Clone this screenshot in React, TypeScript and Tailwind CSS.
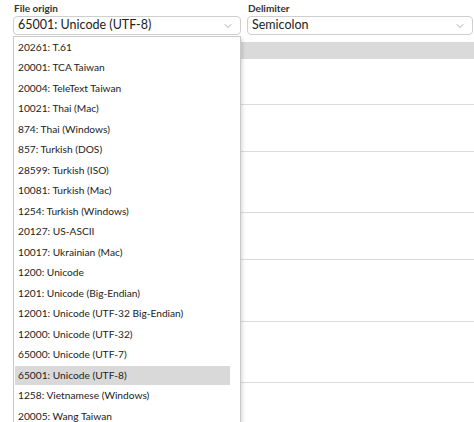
import { ChevronDown } from 'lucide-react';

const encodings = [
  '20261: T.61',
  '20001: TCA Taiwan',
  '20004: TeleText Taiwan',
  '10021: Thai (Mac)',
  '874: Thai (Windows)',
  '857: Turkish (DOS)',
  '28599: Turkish (ISO)',
  '10081: Turkish (Mac)',
  '1254: Turkish (Windows)',
  '20127: US-ASCII',
  '10017: Ukrainian (Mac)',
  '1200: Unicode',
  '1201: Unicode (Big-Endian)',
  '12001: Unicode (UTF-32 Big-Endian)',
  '12000: Unicode (UTF-32)',
  '65000: Unicode (UTF-7)',
  '65001: Unicode (UTF-8)',
  '1258: Vietnamese (Windows)',
  '20005: Wang Taiwan',
];

// heights include the bottom rule
const rowHeights = [46, 47, 61, 47, 62, 61, 40];

function Select({ label, value }: { label: string; value: string }) {
  return (
    <div className="flex flex-col">
      <span className="text-[10px] font-bold leading-[14px] text-[#333] pl-px">{label}</span>
      <div className="mt-px h-[19px] flex items-center justify-between rounded-[4px] border border-[#cfcfcf] pl-[4px] pr-[6px] bg-white">
        <span className="text-[12.5px] text-[#222] leading-none">{value}</span>
        <ChevronDown className="w-3 h-3 text-[#777]" strokeWidth={1.25} />
      </div>
    </div>
  );
}

export default function App() {
  return (
    <div
      className="relative w-[474px] h-[422px] overflow-hidden bg-white"
      style={{ fontFamily: 'Lato, "Noto Sans", sans-serif' }}
    >
      <div className="grid grid-cols-[228px_226px] gap-[6px] pl-[13px] pt-px">
        <Select label="File origin" value="65001: Unicode (UTF-8)" />
        <Select label="Delimiter" value="Semicolon" />
      </div>

      <div className="ml-[13px] mt-[7px]">
        <div className="h-[17px] bg-[#dadada]" />
        {rowHeights.map((h, i) => (
          <div key={i} className="border-b border-[#dcdcdc]" style={{ height: h }} />
        ))}
      </div>

      <div className="absolute left-[13px] top-[36px] w-[228px] bottom-[-20px] bg-white border border-[#c9c9c9] shadow-[2px_2px_3px_rgba(0,0,0,0.12)]">
        {encodings.map((e) => {
          const active = e === '65001: Unicode (UTF-8)';
          return (
            <div key={e} className="h-[20.5px] py-px pl-px pr-[10px]">
              <div
                className={`h-full flex items-center pl-[3px] text-[10.2px] text-[#222] ${active ? 'bg-[#d9d9d9]' : ''}`}
              >
                {e}
              </div>
            </div>
          );
        })}
      </div>
    </div>
  );
}
